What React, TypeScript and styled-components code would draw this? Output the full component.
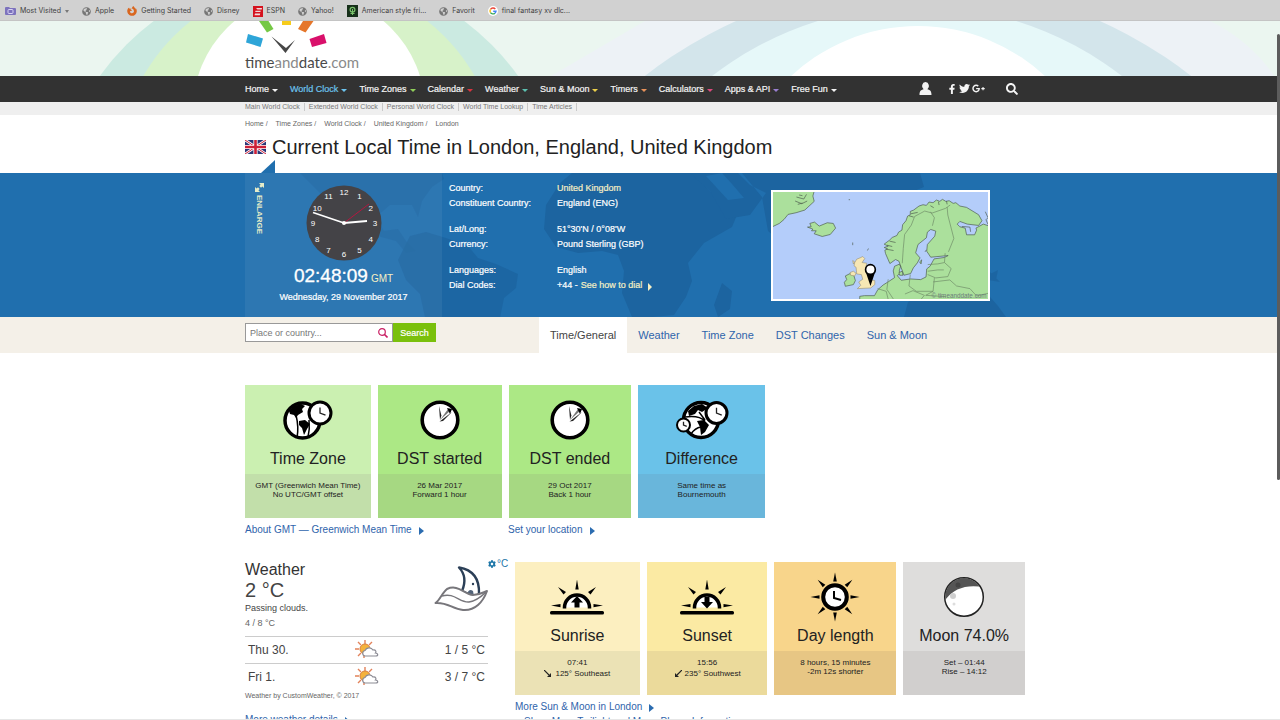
import React from "react";
import styled, { createGlobalStyle } from "styled-components";
import { FaFacebookF, FaTwitter, FaGooglePlusG, FaSearch, FaGlobeAmericas, FaFirefoxBrowser, FaCog } from "react-icons/fa";

const GlobalStyle = createGlobalStyle`
  * { box-sizing: border-box; }
  body {
    margin: 0;
    background: #fff;
    color: #333;
    font-family: "Liberation Sans", Arial, Helvetica, sans-serif;
  }
  a { color: inherit; text-decoration: none; }
  h1, h2, h3, p, dl, dd, dt, ul { margin: 0; padding: 0; font-weight: normal; }
  ul { list-style: none; }
  button, input { font-family: inherit; }
  svg { display: block; flex-shrink: 0; }
`;

const Browser = styled.div`
  position: relative;
  height: 100vh;
  overflow: hidden;
  border-bottom: 1px solid #e6e6e6;
`;

const ScrollThumb = styled.div`
  position: absolute;
  right: 0;
  top: 34px;
  width: 3px;
  height: 446px;
  border-radius: 2px;
  background: #5c5c5c;
`;

const BookmarkBar = styled.nav`
  display: flex;
  align-items: center;
  gap: 13px;
  height: 21px;
  padding: 2px 5px 0;
  background: #d1d1d1;
  border-bottom: 1px solid #c4c4c4;
  color: #3f3f3f;
  font: 7px/12px Inter, sans-serif;
`;

const Bookmark = styled.a`
  display: flex;
  align-items: center;
  gap: 4px;
  white-space: nowrap;
`;

const Container = styled.div`
  max-width: 790px;
  margin: 0 auto;
  padding-right: 10px;
`;

const Masthead = styled.header`
  position: relative;
  height: 55px;
  background: #ebf6f0;
`;

const Arcs = styled.svg`
  position: absolute;
  inset: 0;
  width: 100%;
  height: 100%;
`;

const LogoLink = styled.a`
  position: relative;
  display: block;
  width: 120px;
  color: #8a8a8a;
  font: 15px/18px Lato, sans-serif;
  b { color: #4a4a4a; font-weight: normal; }
`;

const MainNav = styled.nav`
  height: 26px;
  background: #323232;
  color: #f4f4f4;
`;

const NavInner = styled(Container)`
  display: flex;
  align-items: center;
  height: 25px;
`;

const NavList = styled.ul`
  display: flex;
  gap: 12px;
  font-size: 9px;
  line-height: 14px;
`;

const NavItem = styled.a<{ $tone: string; $active?: boolean }>`
  display: flex;
  align-items: center;
  gap: 3px;
  white-space: nowrap;
  color: ${(p) => (p.$active ? "#6cc3ee" : "#f4f4f4")};
  -webkit-text-stroke: 0.2px;
  &::after {
    content: "";
    margin-top: 4px;
    border: 3px solid transparent;
    border-top-color: ${(p) => p.$tone};
    border-bottom: 0;
  }
`;

const NavIcons = styled.div`
  display: flex;
  align-items: center;
  margin-left: 82px;
`;

const Social = styled.div`
  display: flex;
  align-items: center;
  gap: 2px;
  margin: 0 21px 0 15px;
`;

const IconLink = styled.a`
  display: block;
`;

const SubNav = styled.nav`
  height: 13px;
  background: #efefef;
  color: #777;
  font-size: 7px;
  ul { display: flex; }
  li { padding-right: 4px; margin: 1px 4px 0 0; border-right: 1px solid #c9c9c9; height: 8px; line-height: 8px; }
`;

const Crumbs = styled.nav`
  display: flex;
  gap: 8px;
  padding-top: 4px;
  color: #666;
  font-size: 7px;
  line-height: 10px;
`;

const TitleRow = styled.div`
  display: flex;
  align-items: center;
  gap: 6px;
  height: 44px;
  padding-bottom: 8px;
  h1 { font-size: 20px; line-height: 24px; color: #222; }
`;

const Hero = styled.section`
  position: relative;
  background: #206fae;
  color: #fff;
`;

const HeroInner = styled(Container)`
  position: relative;
  display: flex;
  height: 144px;
`;

const Tail = styled.span`
  position: absolute;
  left: 16px;
  top: -13px;
  border-left: 14px solid transparent;
  border-bottom: 13px solid #206fae;
`;

const ClockPanel = styled.div`
  display: grid;
  grid-template-columns: 28px 1fr 28px;
  width: 197px;
  background: rgba(255, 255, 255, 0.06);
`;

const Enlarge = styled.button`
  display: flex;
  flex-direction: column;
  align-items: center;
  align-self: start;
  gap: 3px;
  margin: 10px 0 0;
  padding: 0;
  border: 0;
  background: none;
  color: #e6ecc8;
  font-size: 8px;
  font-weight: bold;
  line-height: 10px;
  span { writing-mode: vertical-rl; }
`;

const ClockFace = styled.div`
  display: flex;
  flex-direction: column;
  align-items: center;
  padding-top: 12px;
  white-space: nowrap;
`;

const Digital = styled.p`
  display: flex;
  align-items: baseline;
  gap: 3px;
  height: 24px;
  margin-top: 3px;
  font-size: 19px;
  line-height: 24px;
  -webkit-text-stroke: 0.3px;
  small { font-size: 10px; line-height: 12px; color: #f5efc4; -webkit-text-stroke: 0; }
`;

const DateLine = styled.p`
  margin-top: 2px;
  font-size: 9px;
  line-height: 14px;
  -webkit-text-stroke: 0.2px;
`;

const Facts = styled.dl`
  flex: 1;
  padding: 8px 0 0 7px;
  font-size: 9px;
  line-height: 15px;
  -webkit-text-stroke: 0.2px;
`;

const Fact = styled.div<{ $gap?: boolean }>`
  display: grid;
  grid-template-columns: 108px 1fr;
  margin-top: ${(p) => (p.$gap ? "11px" : "0")};
  a { color: #f5efc4; }
`;

const MapLink = styled.a`
  align-self: flex-start;
  margin: 17px 35px 0 0;
  border: 2px solid #fff;
`;

const TabBar = styled.section`
  background: #f4f0e8;
`;

const TabInner = styled(Container)`
  display: flex;
  justify-content: space-between;
  height: 36px;
`;

const SearchForm = styled.form`
  display: flex;
  width: 191px;
  height: 19px;
  margin-top: 6px;
`;

const SearchBox = styled.label`
  display: flex;
  flex: 1;
  align-items: center;
  padding: 0 4px;
  border: 1px solid #999;
  background: #fff;
  color: #c91f63;
`;

const SearchInput = styled.input`
  flex: 1;
  min-width: 0;
  padding: 0;
  border: 0;
  outline: 0;
  background: none;
  color: #333;
  font-size: 9px;
  &::placeholder { color: #777; opacity: 1; }
`;

const SearchButton = styled.button`
  width: 43px;
  padding: 0;
  border: 0;
  background: #7ac00c;
  color: #fff;
  font-size: 9px;
  -webkit-text-stroke: 0.2px;
`;

const Tabs = styled.nav`
  display: flex;
  width: 486px;
`;

const Tab = styled.a<{ $active?: boolean }>`
  padding: 0 11px;
  font-size: 11px;
  line-height: 36px;
  white-space: nowrap;
  color: ${(p) => (p.$active ? "#444" : "#2f64ab")};
  background: ${(p) => (p.$active ? "#fff" : "none")};
`;

const CardGrid = styled.div<{ $columns: string }>`
  display: grid;
  grid-template-columns: ${(p) => p.$columns};
  gap: 7px;
`;

const Overview = styled.section`
  max-width: 520px;
  padding-top: 32px;
`;

const CardBox = styled.article<{ $bg: string }>`
  display: flex;
  flex-direction: column;
  height: 133px;
  background: ${(p) => p.$bg};
  color: #222;
  text-align: center;
`;

const CardIcon = styled.div`
  display: flex;
  align-items: center;
  justify-content: center;
  height: 57px;
  margin-top: 6px;
`;

const CardTitle = styled.h3`
  font-size: 16px;
  line-height: 22px;
  white-space: nowrap;
`;

const CardFoot = styled.div<{ $bg: string; $tall?: boolean }>`
  flex: 1;
  margin-top: 4px;
  padding-top: ${(p) => (p.$tall ? "6px" : "7px")};
  background: ${(p) => p.$bg};
  font-size: 8px;
  line-height: ${(p) => (p.$tall ? "11px" : "9px")};
  white-space: nowrap;
`;

const FootLine = styled.p`
  display: flex;
  align-items: center;
  justify-content: center;
  gap: 3px;
`;

const LinkGrid = styled.div`
  display: grid;
  grid-template-columns: 1fr 1fr;
  column-gap: 6px;
  padding-top: 4px;
`;

const MoreLink = styled.a<{ $indent?: boolean }>`
  display: flex;
  align-items: center;
  gap: 7px;
  padding-left: ${(p) => (p.$indent ? "9px" : "0")};
  color: #2f64ab;
  font-size: 10px;
  line-height: 15px;
  white-space: nowrap;
  &::after {
    content: "";
    margin-top: 3px;
    border: 4px solid transparent;
    border-left: 5px solid #2b6cb0;
    border-right: 0;
  }
`;

const Details = styled.section`
  display: flex;
  gap: 7px;
  padding-top: 25px;
`;

const Weather = styled.div`
  display: flex;
  width: 263px;
`;

const WeatherMain = styled.div`
  width: 243px;
`;

const Now = styled.div`
  display: flex;
  justify-content: space-between;
  height: 74px;
  color: #444;
  h2 { font-size: 16px; line-height: 15px; color: #333; }
`;

const Temp = styled.p`
  font-size: 20px;
  line-height: 26px;
`;

const NowText = styled.p`
  font-size: 9px;
  line-height: 15px;
  margin-top: -2px;
  & + & { margin-top: 0; color: #666; }
`;

const SharkWrap = styled.div`
  padding-top: 4px;
`;

const Unit = styled.button`
  display: flex;
  align-items: center;
  align-self: flex-start;
  gap: 1px;
  width: 20px;
  height: 10px;
  margin-top: -3px;
  padding: 0;
  border: 0;
  background: none;
  color: #1f77a8;
  font-size: 10px;
  line-height: 10px;
  white-space: nowrap;
`;

const Forecast = styled.table`
  width: 100%;
  border-collapse: collapse;
  color: #444;
  font-size: 12px;
  line-height: 16px;
  th { width: 110px; padding: 0 3px 1px; font-weight: normal; text-align: left; }
  td { height: 27px; padding: 0 0 1px; border: 0; }
  td:last-child { padding-right: 3px; text-align: right; }
  tr { border-top: 1px solid #ccc; }
`;

const Credit = styled.p`
  color: #666;
  font-size: 7px;
  line-height: 10px;
`;

const MoreWeather = styled.div`
  padding-top: 11px;
`;

const SunMoon = styled.div`
  flex: 1;
`;

const SunLinks = styled.div`
  padding-top: 4px;
`;

const FolderIcon = () => (
  <svg width="11" height="10" viewBox="0 0 11 10">
    <path d="M0 2a1 1 0 0 1 1-1h3l1 1h5a1 1 0 0 1 1 1v5a1 1 0 0 1-1 1H1a1 1 0 0 1-1-1z" fill="#7d72bd" />
    <rect x="3" y="3.5" width="5" height="4" rx="1" fill="none" stroke="#d8d3f4" />
  </svg>
);

const CaretIcon = () => (
  <svg width="4" height="3" viewBox="0 0 4 3"><path d="M0 0h4L2 3z" fill="#777" /></svg>
);

const EspnIcon = () => (
  <svg width="10" height="11" viewBox="0 0 10 11">
    <rect width="10" height="11" fill="#d5121e" />
    <path d="M3 2h6l-.3 1.6H4.500zM2.500 4.700h5.200l-.3 1.300H2.200zM2 7.500h5.200l-.4 1.800H1.500z" fill="#f2dada" />
  </svg>
);

const TreeIcon = () => (
  <svg width="11" height="12" viewBox="0 0 11 12">
    <rect width="11" height="12" fill="#17301a" />
    <circle cx="5.5" cy="4.800" r="2.400" fill="none" stroke="#79c26b" strokeWidth="1.200" />
    <path d="M5.500 4v6M3.500 8.500h4" stroke="#79c26b" />
  </svg>
);

const GoogleIcon = () => (
  <svg width="10" height="10" viewBox="0 0 10 10">
    <circle cx="5" cy="5" r="5" fill="#fff" />
    <g fill="none" strokeWidth="1.400">
      <path d="M7.300 3A3 3 0 0 0 2.500 3.300" stroke="#ea4335" />
      <path d="M2.500 3.300a3 3 0 0 0 0 3.300" stroke="#fbbc05" />
      <path d="M2.500 6.600a3 3 0 0 0 4.400.6" stroke="#34a853" />
      <path d="M6.900 7.200A3 3 0 0 0 8 5.200H5.200" stroke="#4285f4" />
    </g>
  </svg>
);

const LogoMark = () => (
  <svg width="90" height="32" viewBox="0 0 90 32">
    <path d="M3 13l15 4.500-2.500 8.500L1 21.500z" fill="#2ea5d8" />
    <path d="M14 0h9.500l5 8-6.500 3.500z" fill="#76c846" />
    <path d="M37 0h9v4h-9z" fill="#f6cc1c" />
    <path d="M58 0h10.500l-8 11.500L53 8z" fill="#e5762b" />
    <path d="M64.500 18l14.500-5 2.500 9-14.500 4z" fill="#d9106b" />
    <path d="M26.500 15.500l14 16.500 9.500-13-9 8z" fill="#474747" />
  </svg>
);

const HeaderArcs = () => (
  <Arcs viewBox="0 21 1280 55" preserveAspectRatio="xMidYMid slice" aria-hidden="true">
    <path d="M551 76L645 21H1210q45 22 70 64H551z" fill="#edf2f6" />
    <circle cx="309" cy="227" r="258" fill="#cbeae1" />
    <circle cx="309" cy="171" r="191" fill="#d7f2c9" />
    <circle cx="309" cy="110" r="116" fill="#fff" />
    <circle cx="918" cy="426" r="444" fill="#d3e5eb" />
    <circle cx="917" cy="341" r="335" fill="#e6f8f9" />
    <circle cx="918" cy="212" r="186" fill="#fff" />
  </Arcs>
);

const UserIcon = () => (
  <svg width="13" height="13" viewBox="0 0 13 13">
    <path d="M6.500 0a3.600 4 0 0 0-1.900 7.300C2 8 .5 9 .5 13h12c0-4-1.500-5-4.100-5.700A3.600 4 0 0 0 6.500 0z" fill="#f2f2f2" />
  </svg>
);

const Flag = () => (
  <svg width="21" height="14" viewBox="0 0 21 14">
    <rect width="21" height="14" fill="#2a3577" />
    <path d="M0 0l21 14M21 0L0 14" stroke="#fff" strokeWidth="2.600" />
    <path d="M0 0l21 14M21 0L0 14" stroke="#cc2038" strokeWidth="1" />
    <path d="M10.500 0v14M0 7h21" stroke="#fff" strokeWidth="4.200" />
    <path d="M10.500 0v14M0 7h21" stroke="#cc2038" strokeWidth="2.600" />
  </svg>
);

const WorldMap = () => (
  <Arcs viewBox="0 173 1280 144" preserveAspectRatio="xMidYMid slice" aria-hidden="true">
    <g fill="#1c64a0">
      <path d="M300 173l22 22 14 20 16 12 22 8 22 6 10 12 10-2-10-10-8-12-14 2-8-14 14-12 22 0 6 12 4-16 10-14 12-8-2-6z" opacity=".55" />
      <path d="M410 236l16-4 20 6 22 8 10 12 18 6 22 10-2 14-12 10-4 20-14 0-10 4-50 0-6-28-14-14-8-20z" opacity=".8" />
      <path d="M572 173l-12 10-14 22-2 24 12 18 22 6 24-2 16 4 6 16-2 22 10 24 20 0 22-2 12-18 6-16-4-18 16-20 28-16 10-24-22-2-16-16-14-24-22-8-24 2-26 4-20-8z" />
      <path d="M722 283l10 8-2 18-12 8-4-12z" />
      <path d="M690 173l20 18 16 28 24-4 16-22-16-8-12-12zM742 173h178l4 14-20 8-60 2-40 18-20 30-16-14-6-34z" />
      <path d="M905 317l14-12 24-10 24-2 20 8 18 16zM984 266l16 16-12-2zM990 274l8-4-2 10z" opacity=".85" />
      <path d="M908 302l26-14 50 2 14 16 8 11H904z" />
    </g>
    <path d="M706 176l22 24 16-2-12-14-10-11z" fill="#206fae" />
  </Arcs>
);

const numerals = ["12", "1", "2", "3", "4", "5", "6", "7", "8", "9", "10", "11"];

const Dial = () => (
  <svg width="76" height="76" viewBox="0 0 76 76" role="img" aria-label="Analog clock">
    <circle cx="38" cy="38" r="37.500" fill="#444347" />
    <g fill="#fff" fontSize="8" textAnchor="middle">
      {numerals.map((n, i) => (
        <text key={n} x={38 + 31 * Math.sin((i * Math.PI) / 6)} y={41 - 31 * Math.cos((i * Math.PI) / 6)}>{n}</text>
      ))}
    </g>
    <path d="M38 38L63 19" stroke="#b3173f" />
    <path d="M38 38L7 27.500" stroke="#fff" strokeWidth="1.600" />
    <path d="M38 38l23-2" stroke="#fff" strokeWidth="2" />
    <circle cx="38" cy="38" r="2" fill="#fff" />
  </svg>
);

const ExpandIcon = () => (
  <svg width="9" height="9" viewBox="0 0 9 9" fill="#e6ecc8">
    <path d="M4 0h5v5L7.300 3.400 6 4.700 4.300 3l1.300-1.300zM0 4l1.600 1.600L3 4.300 4.700 6 3.400 7.300 5 9H0z" />
  </svg>
);

const EuropeMap = () => (
  <svg width="215" height="107" viewBox="26 21 642 320" preserveAspectRatio="none" role="img" aria-label="Map of Europe showing London">
    <rect x="26" y="21" width="642" height="320" fill="#b4cdfa" />
    <g fill="#abe09c" stroke="#4b5a4b" strokeWidth="2" strokeLinejoin="round">
      <path d="M20 15H150l-5 18 4 16-28 26-26 8-24 5-12 15-14 12-25 12z" />
      <path d="M92 48l20 8 16-8M96 36l22 6 8-14M104 30l10 2M100 58l14-4" fill="none" />
      <path d="M140 125l-4-10 14-4 14 12 24-10 18 2 7 14-16 19-24 6-24-8 6-9-14 0 4-5-16-6z" />
      <path d="M362 205l-2-10 8-4-10-4 12-4-12-6 16-12 8-8 14-6 5-10 10-6 2-16 10-12 5-14 8-4 0-10 10-4 16-12 12-4 10 2 8-10 12 2 10-8 10 4 8-6 10 6 10-2 12 8 8-2 12 10 20 4 36 22 10 18-10 14-34-4-22-8-8 8 8 8 16 4 4 20 24 0 6-14-2-6 22-12 24 8v225H285l0-17 14-2 30 0 10-18 16-14 16-10 18-12-4-20 4-14 14-6 4 6-4 14 2 8-8 6 12 14 28-4 30 2 16-8 2-24 10-8 12-22 30-4 12-6-52 5-12-18 2-20 22-25 3-15-15-5-10 8-3 17-25 20-7 25 13 15-8 15-12 15-8 17-20 5-8-22-7-20-10-5-17 12z" />
      <path d="M242 272l16-8 8 2 6 20-6 12-24 5-3-12 7-8z" />
      <path d="M402 262l10-4 2 12-10 0zM464 230l6-6-2 12zM480 200l4-6M252 44l4 0M264 172l0 8M308 196l3-6" />
      <path d="M374 168l18 4M364 192l22 4M366 180l16 4M438 86l20-4M432 92l14 4M496 62l10 6M520 50l2 10M544 48l2 10M660 80l8 18-6 6 6 14M590 124l24 2 2 14" fill="none" />
    </g>
    <g fill="#f7e7b4" stroke="#8a8060" strokeWidth="1.500">
      <path d="M276 222l10-4 8-4 6 6-8 12 14 2-4 16 10 16 8 18 10 2 0 12-12 10-40 2 10-10-6-10 12-8-4-14-14-2-2-20-6-4 2-10z" />
      <path d="M256 262l10-4 8 6-4 8-12-2zM264 226l6 4-4 6z" />
    </g>
    <g fill="none" stroke="#6e8a66" strokeWidth="2">
      <path d="M412 234l3-44 4-42 20-28 10-26 30-16 22 6 40-14 14-10M502 122l6-24-12-18M546 66l2 24 18 70-16 40" />
      <path d="M540 204l-2 28 20 18-10 24-36 4-24-10M488 238l30-2 20-4M488 258l30-4 18 0M436 268l-4 34 22 16 50 0 4-40M504 290l50-6 20 18 40 8 20 22 34-8M370 282l-4 30 20 30M338 310l26 8 6 24M420 326l24-10 34 14-10 12M504 318l-22 12 60 4" />
    </g>
    <path d="M317 302l-12-36a17 18 0 1 1 24 0z" fill="#000" />
    <circle cx="317" cy="253" r="12" fill="#fff" />
    <text x="664" y="337" textAnchor="end" fontSize="19" fill="#6b7d7b">© timeanddate.com</text>
  </svg>
);

const MiniClock = ({ x, y, r }: { x: number; y: number; r: number }) => (
  <g>
    <circle cx={x} cy={y} r={r} fill="#fff" stroke="#000" strokeWidth={r > 8 ? 3 : 2} />
    <path d={`M${x} ${y - r * 0.5}V${y}l${r * 0.5} ${r * 0.2}`} fill="none" stroke="#222" strokeWidth="1.300" />
  </g>
);

const ZoneIcon = () => (
  <svg width="50" height="40" viewBox="0 0 50 40">
    <circle cx="19.500" cy="20.500" r="17.500" fill="#fff" stroke="#000" strokeWidth="3.500" />
    <path d="M6 11l5-5 7-2 4 2-3 3 1 3-5 3-2 3-2-3-4-1zM16 21l6-1 5 4-3 5-3 6-2-7-3-3zM28 8l4 5-4 1-2-3z" />
    <path d="M13 15q3 12 1 23M26 20q1 9-1 17" fill="none" stroke="#000" strokeWidth="1.500" />
    <MiniClock x={37} y={13} r={11} />
  </svg>
);

const DstIcon = () => (
  <svg width="40" height="40" viewBox="0 0 40 40">
    <circle cx="20" cy="20" r="17.800" fill="#fff" stroke="#000" strokeWidth="3.600" />
    <path d="M19 6l2.400 9.500L20 20z" fill="#222" />
    <path d="M20 20L28 9l2 2z" fill="#777" />
    <path d="M19.500 21.500L32 12l-9 9z" fill="#222" />
    <path d="M27 8l5 1-2 5z" fill="#000" />
  </svg>
);

const DifferenceIcon = () => (
  <svg width="54" height="40" viewBox="0 0 54 40">
    <circle cx="26" cy="20" r="17.500" fill="#fff" stroke="#000" strokeWidth="3.500" />
    <path d="M13 11l6-5 8-2 6 4-6 4-4-2-3 4-6 2zM22 21l7-1 5 5-4 7-4 3-1-8z" />
    <path d="M10 17q14-2 20 4M26 27q-6 1-10 7M24 12l6 8" fill="none" stroke="#000" strokeWidth="1.500" />
    <MiniClock x={41.5} y={13} r={10.5} />
    <MiniClock x={8.5} y={25} r={6.5} />
  </svg>
);

const HorizonIcon = ({ down }: { down?: boolean }) => (
  <svg width="54" height="36" viewBox="0 0 54 36">
    <path d="M14.500 28.500a12.500 12.500 0 0 1 25 0z" fill="#fff" />
    <path d="M14.500 29.500v-1a12.500 12.500 0 0 1 25 0v1" fill="none" stroke="#000" strokeWidth="3.500" />
    <path d="M25.300 10.500h3.400L27 .5zM13.500 15.500l2.500-2.500L8 8zM40.500 15.500L38 13l8-5zM10.500 25v3.200L1 26.500zM43.500 25v3.200l9.500-1.700z" />
    <path d={down ? "M24.500 18h5v5h3.500l-6 6.500-6-6.500h3.500z" : "M24.500 28.500h5v-5h3.500L27 17l-6 6.500h3.500z"} />
    <rect x="0" y="32" width="54" height="3.400" rx="1.500" />
  </svg>
);

const DayIcon = () => (
  <svg width="50" height="50" viewBox="0 0 50 50">
    {[0, 45, 90, 135, 180, 225, 270, 315].map((a) => (
      <path key={a} d="M23.200 9.500h3.600L25 .5z" transform={`rotate(${a} 25 25)`} />
    ))}
    <circle cx="25" cy="25" r="11.800" fill="#fff" stroke="#000" strokeWidth="4" />
    <path d="M24 19v7l7 2" fill="none" stroke="#000" strokeWidth="2" />
  </svg>
);

const MoonIcon = () => (
  <svg width="42" height="42" viewBox="0 0 42 42">
    <circle cx="21" cy="21" r="19.300" fill="#fff" stroke="#222" strokeWidth="1.500" />
    <path d="M2.500 23.500A18.600 18.600 0 0 1 36.500 10.500Q14 8 2.500 23.500z" fill="#555" />
    <circle cx="10" cy="20" r="3" fill="#bbb" opacity=".7" />
    <circle cx="11" cy="28" r="1.500" fill="#ddd" />
    <circle cx="15" cy="9" r="2.500" fill="#444" />
  </svg>
);

const SharkIcon = () => (
  <svg width="54" height="46" viewBox="0 0 54 46">
    <path d="M25 1.500Q46 5 45 28l-4 3-13-6Q34 11 25 1.500z" fill="#fff" stroke="#2b3f57" strokeWidth="2.400" strokeLinejoin="round" />
    <circle cx="39" cy="18" r="1.200" fill="#2b3f57" />
    <path d="M33 28q2-6 6-3l1 5z" fill="#51637a" />
    <path d="M13 23c11-5 17 5 26 6 6 0 9-2 14-4-4 11-12 20-24 19C18 43 14 36 1.500 37 6 34 8 27 13 23z" fill="#fff" stroke="#77767b" strokeWidth="2" strokeLinejoin="round" />
    <path d="M8 30c12-4 18 7 27 6 7-1 12-5 17-10" fill="none" stroke="#77767b" strokeWidth="1.500" />
  </svg>
);

const CloudSun = () => (
  <svg width="24" height="19" viewBox="0 0 24 19">
    <path d="M10 0v4M3 2l3 3M17 2l-3 3M0 9h4M3 16l3-3M9 18v-3" stroke="#e2825a" strokeWidth="1.400" />
    <circle cx="10" cy="9" r="5" fill="#f4b23c" stroke="#d9803e" />
    <path d="M10 16a2.800 2.800 0 0 1 0-5.500 4.500 4.500 0 0 1 8-.5c3-.5 3.500 2 2.500 3 3 .5 3 3 0 3z" fill="#fff" stroke="#8b8b94" strokeWidth="1.200" />
  </svg>
);

const Arrow = ({ left }: { left?: boolean }) => (
  <svg width="8" height="8" viewBox="0 0 8 8">
    <path d={left ? "M8 0L3 5" : "M0 0l5 5"} stroke="#222" strokeWidth="1.200" />
    <path d={left ? "M1 7V3l4 4z" : "M7 7V3L3 7z"} fill="#222" />
  </svg>
);

interface CardProps {
  title: string;
  bg: string;
  foot: string;
  icon: React.ReactNode;
  tall?: boolean;
  lines: React.ReactNode[];
}

const Card = ({ title, bg, foot, icon, tall, lines }: CardProps) => (
  <CardBox $bg={bg}>
    <CardIcon>{icon}</CardIcon>
    <CardTitle>{title}</CardTitle>
    <CardFoot $bg={foot} $tall={tall}>
      {lines.map((line, i) => <FootLine key={i}>{line}</FootLine>)}
    </CardFoot>
  </CardBox>
);

const globe = <FaGlobeAmericas size={9} color="#777" />;

const bookmarks: { label: string; icon: React.ReactNode; caret?: boolean }[] = [
  { label: "Most Visited", icon: <FolderIcon />, caret: true },
  { label: "Apple", icon: globe },
  { label: "Getting Started", icon: <FaFirefoxBrowser size={10} color="#d9661f" /> },
  { label: "Disney", icon: globe },
  { label: "ESPN", icon: <EspnIcon /> },
  { label: "Yahoo!", icon: globe },
  { label: "American style fri...", icon: <TreeIcon /> },
  { label: "Favorit", icon: globe },
  { label: "final fantasy xv dlc...", icon: <GoogleIcon /> },
];

const navItems = [
  ["Home", "#f4f4f4"],
  ["World Clock", "#6cc3ee"],
  ["Time Zones", "#8fce5a"],
  ["Calendar", "#d8343f"],
  ["Weather", "#5cc0b0"],
  ["Sun & Moon", "#ecd04a"],
  ["Timers", "#e8925a"],
  ["Calculators", "#dc4a7c"],
  ["Apps & API", "#9a7fd0"],
  ["Free Fun", "#f4f4f4"],
];

const DialRow = styled.span`
  display: flex;
  align-items: center;
  gap: 3px;
  &::after {
    content: "";
    margin: 3px 0 0 3px;
    border: 4px solid transparent;
    border-left: 4px solid #f5efc4;
    border-right: 0;
  }
`;

const facts: { label: string; value: React.ReactNode; gap?: boolean }[] = [
  { label: "Country:", value: <a href="#uk">United Kingdom</a> },
  { label: "Constituent Country:", value: "England (ENG)" },
  { label: "Lat/Long:", value: "51°30'N / 0°08'W", gap: true },
  { label: "Currency:", value: "Pound Sterling (GBP)" },
  { label: "Languages:", value: "English", gap: true },
  { label: "Dial Codes:", value: <DialRow>+44 - <a href="#dial">See how to dial</a></DialRow> },
];

export default function App() {
  return (
    <Browser>
      <GlobalStyle />
      <BookmarkBar aria-label="Bookmarks">
        {bookmarks.map((b) => (
          <Bookmark key={b.label} href="#bookmark">{b.icon}{b.label}{b.caret && <CaretIcon />}</Bookmark>
        ))}
      </BookmarkBar>

      <Masthead>
        <HeaderArcs />
        <Container>
          <LogoLink href="#home"><LogoMark /><b>time</b>and<b>date</b>.com</LogoLink>
        </Container>
      </Masthead>

      <MainNav>
        <NavInner>
          <NavList>
            {navItems.map(([label, tone]) => (
              <li key={label}><NavItem href="#nav" $tone={tone} $active={label === "World Clock"}>{label}</NavItem></li>
            ))}
          </NavList>
          <NavIcons>
            <IconLink href="#account" aria-label="Account"><UserIcon /></IconLink>
            <Social>
              <IconLink href="#facebook" aria-label="Facebook"><FaFacebookF size={10} /></IconLink>
              <IconLink href="#twitter" aria-label="Twitter"><FaTwitter size={11} /></IconLink>
              <IconLink href="#google" aria-label="Google Plus"><FaGooglePlusG size={13} /></IconLink>
            </Social>
            <IconLink href="#search" aria-label="Search"><FaSearch size={12} /></IconLink>
          </NavIcons>
        </NavInner>
      </MainNav>

      <SubNav>
        <Container>
          <ul>
            {["Main World Clock", "Extended World Clock", "Personal World Clock", "World Time Lookup", "Time Articles"].map((t) => (
              <li key={t}><a href="#sub">{t}</a></li>
            ))}
          </ul>
        </Container>
      </SubNav>

      <Container>
        <Crumbs aria-label="Breadcrumb">
          {["Home", "Time Zones", "World Clock", "United Kingdom"].map((t) => (
            <span key={t}><a href="#crumb">{t}</a> /</span>
          ))}
          <span>London</span>
        </Crumbs>
        <TitleRow>
          <Flag />
          <h1>Current Local Time in London, England, United Kingdom</h1>
        </TitleRow>
      </Container>

      <Hero>
        <WorldMap />
        <HeroInner>
          <Tail />
          <ClockPanel>
            <Enlarge type="button"><ExpandIcon /><span>ENLARGE</span></Enlarge>
            <ClockFace>
              <Dial />
              <Digital>02:48:09 <small>GMT</small></Digital>
              <DateLine>Wednesday, 29 November 2017</DateLine>
            </ClockFace>
          </ClockPanel>
          <Facts>
            {facts.map((f) => (
              <Fact key={f.label} $gap={f.gap}><dt>{f.label}</dt><dd>{f.value}</dd></Fact>
            ))}
          </Facts>
          <MapLink href="#map"><EuropeMap /></MapLink>
        </HeroInner>
      </Hero>

      <TabBar>
        <TabInner>
          <SearchForm>
            <SearchBox>
              <SearchInput type="text" placeholder="Place or country..." aria-label="Place or country" />
              <svg width="10" height="10" viewBox="0 0 10 10" fill="none" stroke="currentColor">
                <circle cx="4" cy="4" r="3.300" strokeWidth="1.200" />
                <path d="M6.500 6.500l3 3" strokeWidth="1.600" />
              </svg>
            </SearchBox>
            <SearchButton type="button">Search</SearchButton>
          </SearchForm>
          <Tabs>
            {["Time/General", "Weather", "Time Zone", "DST Changes", "Sun & Moon"].map((t, i) => (
              <Tab key={t} href="#tab" $active={i === 0}>{t}</Tab>
            ))}
          </Tabs>
        </TabInner>
      </TabBar>

      <Container>
        <Overview>
          <CardGrid $columns="126fr 124fr 123fr 127fr">
            <Card title="Time Zone" bg="#cbf0b1" foot="#c2dfaa" icon={<ZoneIcon />} lines={["GMT (Greenwich Mean Time)", "No UTC/GMT offset"]} />
            <Card title="DST started" bg="#ace885" foot="#a6d882" icon={<DstIcon />} lines={["26 Mar 2017", "Forward 1 hour"]} />
            <Card title="DST ended" bg="#ace885" foot="#a6d882" icon={<DstIcon />} lines={["29 Oct 2017", "Back 1 hour"]} />
            <Card title="Difference" bg="#6ac2e9" foot="#69b6db" icon={<DifferenceIcon />} lines={["Same time as", "Bournemouth"]} />
          </CardGrid>
          <LinkGrid>
            <MoreLink href="#gmt">About GMT — Greenwich Mean Time</MoreLink>
            <MoreLink href="#location">Set your location</MoreLink>
          </LinkGrid>
        </Overview>

        <Details>
          <Weather>
            <WeatherMain>
              <Now>
                <div>
                  <h2>Weather</h2>
                  <Temp>2 °C</Temp>
                  <NowText>Passing clouds.</NowText>
                  <NowText>4 / 8 °C</NowText>
                </div>
                <SharkWrap><SharkIcon /></SharkWrap>
              </Now>
              <Forecast>
                <tbody>
                  <tr><th scope="row">Thu 30.</th><td><CloudSun /></td><td>1 / 5 °C</td></tr>
                  <tr><th scope="row">Fri 1.</th><td><CloudSun /></td><td>3 / 7 °C</td></tr>
                </tbody>
              </Forecast>
              <Credit>Weather by CustomWeather, © 2017</Credit>
              <MoreWeather><MoreLink href="#weather">More weather details</MoreLink></MoreWeather>
            </WeatherMain>
            <Unit type="button"><FaCog size={8} />°C</Unit>
          </Weather>
          <SunMoon>
            <CardGrid $columns="125fr 121fr 122fr 122fr">
              <Card title="Sunrise" bg="#fcefc0" foot="#ebe2b5" icon={<HorizonIcon />} tall lines={["07:41", <><Arrow /> 125° Southeast</>]} />
              <Card title="Sunset" bg="#fbeaa3" foot="#ebda9b" icon={<HorizonIcon down />} tall lines={["15:56", <><Arrow left /> 235° Southwest</>]} />
              <Card title="Day length" bg="#f8d58b" foot="#e7c684" icon={<DayIcon />} lines={["8 hours, 15 minutes", "-2m 12s shorter"]} />
              <Card title="Moon 74.0%" bg="#dedddc" foot="#d1cfce" icon={<MoonIcon />} lines={["Set – 01:44", "Rise – 14:12"]} />
            </CardGrid>
            <SunLinks>
              <MoreLink href="#sun">More Sun &amp; Moon in London</MoreLink>
              <MoreLink href="#moon" $indent>Show More Twilight and Moon Phase Information</MoreLink>
            </SunLinks>
          </SunMoon>
        </Details>
      </Container>
      <ScrollThumb />
    </Browser>
  );
}
